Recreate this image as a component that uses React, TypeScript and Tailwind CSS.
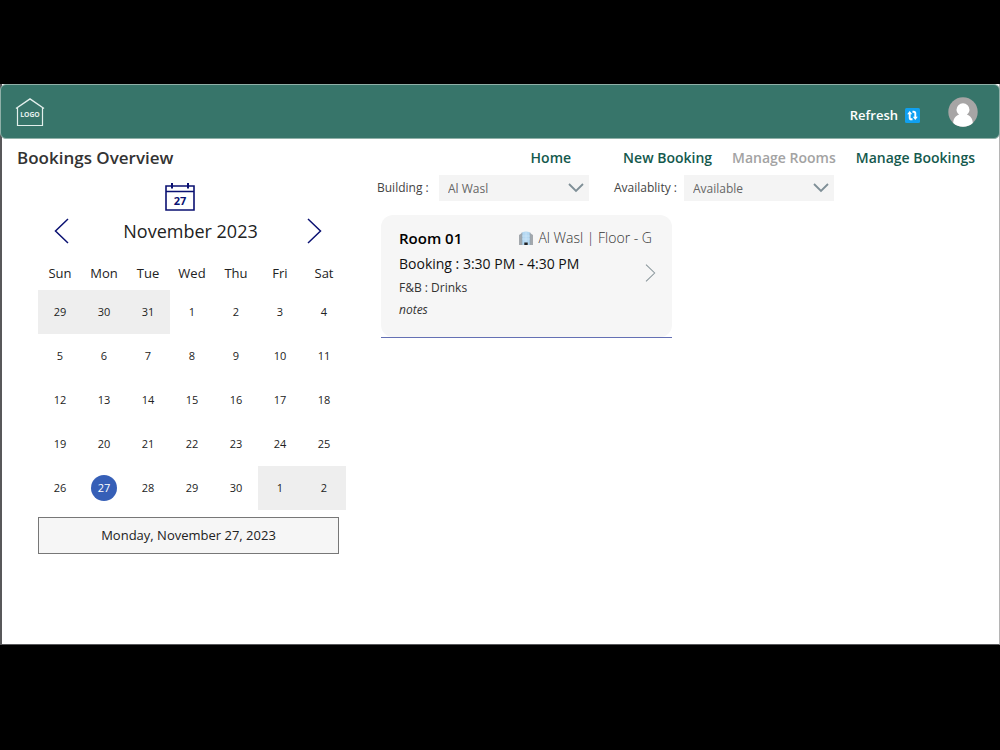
import { useState } from "react";
import clsx from "clsx";

const navItems = [
  { label: "Home", href: "#home", className: "mr-[52px] text-[#14594d]" },
  { label: "New Booking", href: "#new", className: "mr-5 text-[#14594d]" },
  { label: "Manage Rooms", href: "#rooms", className: "mr-5 text-[#a3a3a3]" },
  { label: "Manage Bookings", href: "#bookings", className: "text-[#14594d]" },
];

const filters = [
  {
    id: "building",
    label: "Building :",
    options: ["Al Wasl", "Downtown"],
    labelWidth: "w-[62px]",
  },
  {
    id: "availability",
    label: "Availablity :",
    options: ["Available", "Booked"],
    labelWidth: "w-[70px]",
  },
];

const weekdays = ["Sun", "Mon", "Tue", "Wed", "Thu", "Fri", "Sat"];

const weeks = [
  [29, 30, 31, 1, 2, 3, 4],
  [5, 6, 7, 8, 9, 10, 11],
  [12, 13, 14, 15, 16, 17, 18],
  [19, 20, 21, 22, 23, 24, 25],
  [26, 27, 28, 29, 30, 1, 2],
];

const bookings = [
  {
    id: 1,
    room: "Room 01",
    place: "Al Wasl | Floor - G",
    time: "3:30 PM - 4:30 PM",
    food: "Drinks",
    notes: "notes",
  },
];

function isOutside(week: number, day: number) {
  return (week === 0 && day > 7) || (week === 4 && day < 20);
}

function Chevron({ left, className }: { left?: boolean; className?: string }) {
  return (
    <svg viewBox="0 0 15 26" fill="none" stroke="currentColor" className={className}>
      <path d={left ? "M14 1 1.500 13 14 25" : "M1 1 13.500 13 1 25"} />
    </svg>
  );
}

function Logo() {
  return (
    <svg viewBox="0 0 30 30" className="h-[30px] w-[30px]" fill="none" stroke="#e3efec">
      <path d="M1 11.500 15 2l14 9.500" strokeWidth="1.500" />
      <path d="M2.500 11v17.500h25V11" strokeWidth="1.200" />
      <text
        x="15"
        y="19.500"
        textAnchor="middle"
        fontSize="6.800"
        fontWeight="700"
        fill="#e3efec"
        stroke="none"
      >
        LOGO
      </text>
    </svg>
  );
}

function RefreshIcon() {
  return (
    <svg viewBox="0 0 15 15" className="h-[15px] w-[15px]" fill="none">
      <rect width="15" height="15" rx="1.500" fill="#10a0f0" />
      <path
        d="M7.500 11.300H6.300q-1.600 0-1.600-1.600V5M7.500 3.700h1.200q1.600 0 1.600 1.600V10"
        stroke="#fff"
        strokeWidth="1.900"
      />
      <path d="M2.200 6.200 4.700 3l2.500 3.200zM7.800 8.800l2.500 3.200 2.500-3.200z" fill="#fff" />
    </svg>
  );
}

function Avatar() {
  return (
    <svg viewBox="0 0 30 30" className="h-[30px] w-[30px]">
      <circle cx="15" cy="15" r="14.700" fill="#a7a5a5" />
      <path
        d="M5.200 26c.3-4.800 2.500-7.300 6-8.500C9.300 16.200 8.500 14.500 8.500 12.800a6.500 6.500 0 0 1 13 0c0 1.700-.8 3.400-2.700 4.700 3.500 1.200 5.700 3.700 6 8.500A14.700 14.700 0 0 1 5.200 26z"
        fill="#fff"
      />
    </svg>
  );
}

function CalendarIcon() {
  return (
    <svg viewBox="0 0 30 28" className="h-7 w-[30px]" fill="none" stroke="#0a1172">
      <path d="M1 3h28v24H1zM1 8.500h28" strokeWidth="1.600" />
      <path d="M7 0v5.500M23 0v5.500" strokeWidth="2" />
      <text
        x="15"
        y="22"
        textAnchor="middle"
        fontSize="11"
        fontWeight="700"
        fill="#0a1172"
        stroke="none"
      >
        27
      </text>
    </svg>
  );
}

function BuildingIcon() {
  return (
    <svg viewBox="0 0 16 14" className="h-[14px] w-4">
      <path d="M1 4 4 2v12H1zM15 4l-3-2v12h3z" fill="#a3a8ad" />
      <path d="M4 1.500Q8-.5 12 1.500V14H4z" fill="#b4d8f2" />
      <path d="M4 1.500V14M12 1.500V14" stroke="#8fa3b2" strokeWidth=".7" />
      <path d="M8 1v10M4 5h8M4 8h8" stroke="#d3e9f8" strokeWidth=".6" />
      <path d="M6.300 11.500h3.400V14H6.300z" fill="#222" />
    </svg>
  );
}

export default function App() {
  const [selected, setSelected] = useState(27);

  return (
    <div className="min-h-screen bg-black py-[84px] font-['Open_Sans',sans-serif] text-[#222]">
      <div className="min-h-[561px] border-r border-b border-l-2 border-r-[#b5b5b5] border-b-[#58585a] border-l-[#58585a] bg-white">
        <header className="-mr-px -ml-0.5 flex h-[55px] items-center rounded-md border border-[#8fb0a8] bg-[#37756a] px-[14px]">
          <Logo />
          <button className="mt-2 mr-7 ml-auto flex items-center gap-[7px] text-[13px] font-semibold text-white">
            Refresh
            <RefreshIcon />
          </button>
          <button aria-label="Account" className="mr-[7px]">
            <Avatar />
          </button>
        </header>

        <div className="flex h-9 items-center justify-between pt-0.5 pr-6 pl-[15px]">
          <h1 className="text-[17px] font-semibold text-[#333]">Bookings Overview</h1>
          <nav className="flex text-sm font-semibold">
            {navItems.map((item) => (
              <a key={item.label} href={item.href} className={item.className}>
                {item.label}
              </a>
            ))}
          </nav>
        </div>

        <div className="flex items-start">
          <aside className="mr-[31px] ml-9 w-[308px] shrink-0 pt-2">
            <div className="flex justify-center pr-6">
              <CalendarIcon />
            </div>
            <div className="mt-1.5 flex items-center pr-6 pl-4 text-[#0a1172]">
              <button aria-label="Previous month" className="w-5">
                <Chevron left className="h-[26px] w-[15px] stroke-[1.5]" />
              </button>
              <h2 className="flex-1 text-center text-lg text-[#222]">November 2023</h2>
              <button aria-label="Next month">
                <Chevron className="h-[26px] w-[15px] stroke-[1.5]" />
              </button>
            </div>

            <table className="mt-[13px] w-full table-fixed text-center">
              <thead>
                <tr className="h-8 text-[13px]">
                  {weekdays.map((day) => (
                    <th key={day} className="font-normal">
                      {day}
                    </th>
                  ))}
                </tr>
              </thead>
              <tbody>
                {weeks.map((days, week) => (
                  <tr key={week} className="h-11 text-[11px]">
                    {days.map((day) => {
                      const outside = isOutside(week, day);
                      return (
                        <td key={day} className={clsx("p-0", outside && "bg-[#eeeeee]")}>
                          <button
                            onClick={() => !outside && setSelected(day)}
                            className={clsx(
                              "h-[26px] w-[26px] rounded-full",
                              !outside && day === selected && "bg-[#365fb7] text-white"
                            )}
                          >
                            {day}
                          </button>
                        </td>
                      );
                    })}
                  </tr>
                ))}
              </tbody>
            </table>

            <div className="mt-[7px] mr-[7px] flex h-[37px] items-center justify-center border border-[#777] bg-[#f6f6f6] text-[13px]">
              Monday, November {selected}, 2023
            </div>
          </aside>

          <main className="flex-1">
            <div className="flex gap-[25px] text-xs text-[#444]">
              {filters.map((filter) => (
                <div key={filter.id} className="flex items-center">
                  <label htmlFor={filter.id} className={filter.labelWidth}>
                    {filter.label}
                  </label>
                  <div className="relative">
                    <select
                      id={filter.id}
                      className="h-[26px] w-[150px] appearance-none bg-[#f4f4f4] pt-0.5 pl-[9px] text-xs text-[#666]"
                    >
                      {filter.options.map((option) => (
                        <option key={option}>{option}</option>
                      ))}
                    </select>
                    <svg
                      viewBox="0 0 16 10"
                      className="pointer-events-none absolute top-2 right-[5px] h-[10px] w-4"
                      fill="none"
                      stroke="#7f8f97"
                      strokeWidth="1.800"
                    >
                      <path d="m1 1 7 7 7-7" />
                    </svg>
                  </div>
                </div>
              ))}
            </div>

            <ul className="mt-[14px] ml-1 w-[291px]">
              {bookings.map((booking) => (
                <li key={booking.id} className="border-b border-[#6470b4]">
                  <div className="flex h-[122px] flex-col rounded-xl bg-[#f6f6f6] pt-[11px] pr-5 pl-[18px]">
                    <div className="flex items-center justify-between">
                      <h3 className="text-[15px] leading-6 font-semibold text-black">
                        {booking.room}
                      </h3>
                      <p className="flex items-center gap-1 text-sm font-light text-[#333]">
                        <BuildingIcon />
                        {booking.place}
                      </p>
                    </div>
                    <div className="flex items-start justify-between">
                      <div className="text-xs text-[#333]">
                        <p className="text-sm leading-7 text-[#111]">Booking : {booking.time}</p>
                        <p className="leading-5">F&amp;B : {booking.food}</p>
                        <p className="leading-6 italic">{booking.notes}</p>
                      </div>
                      <button aria-label="Open booking" className="-mr-1 pt-[14px] text-[#8a979c]">
                        <Chevron className="h-[18px] w-[11px] stroke-[1.5]" />
                      </button>
                    </div>
                  </div>
                </li>
              ))}
            </ul>
          </main>
        </div>
      </div>
    </div>
  );
}
